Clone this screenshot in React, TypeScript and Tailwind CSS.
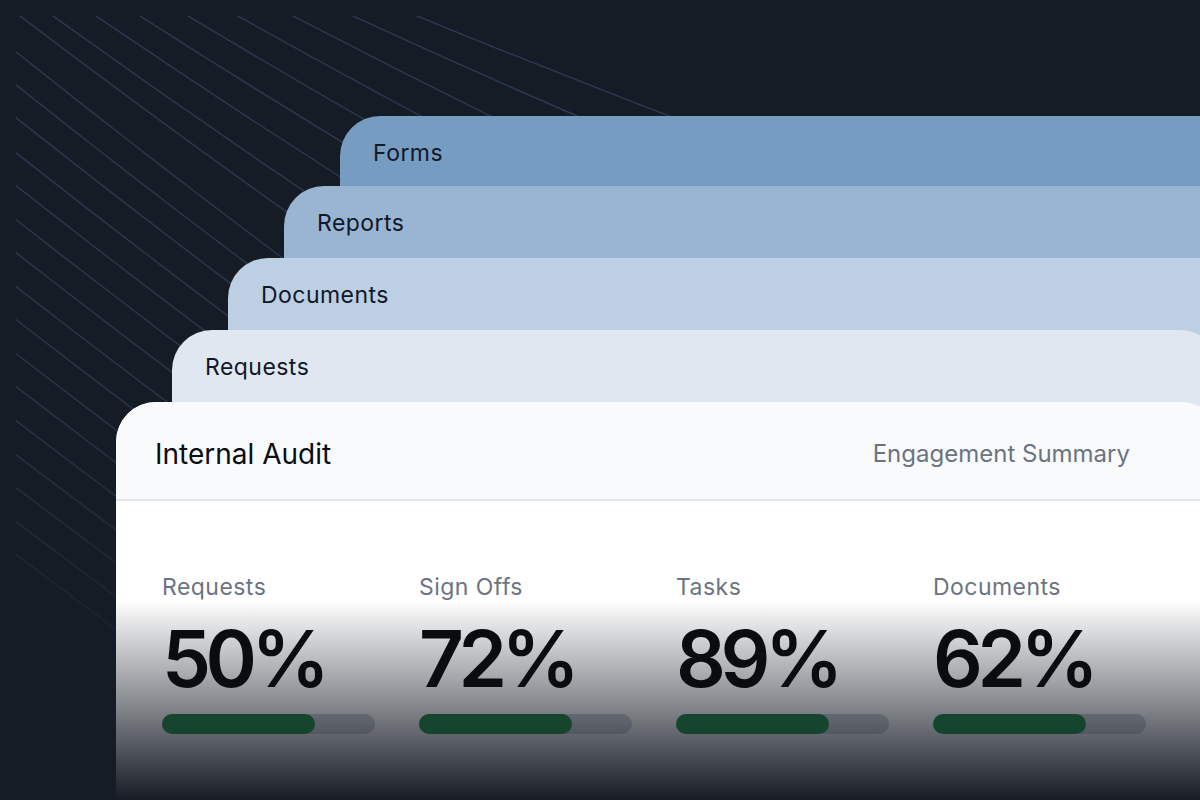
import React from 'react';

const TOP_STARTS = [
  { x: 20, s: 0.76 },
  { x: 53, s: 0.72 },
  { x: 96, s: 0.68 },
  { x: 140, s: 0.64 },
  { x: 188, s: 0.6 },
  { x: 238, s: 0.56 },
  { x: 293, s: 0.52 },
  { x: 353, s: 0.46 },
  { x: 417, s: 0.41 },
];

const LEFT_STARTS = [52, 85, 118, 153, 186, 220, 253, 287, 320, 354, 387, 421, 455, 488, 522, 555];

const TABS = [
  { label: 'Forms', box: 'ml-[340px] w-[960px] h-[110px] bg-[#769cc2]' },
  { label: 'Reports', box: 'ml-[284px] w-[1016px] h-[112px] bg-[#9ab5d2]' },
  { label: 'Documents', box: 'ml-[228px] w-[1072px] h-[112px] bg-[#bccfe3]' },
  { label: 'Requests', box: 'ml-[172px] w-[1048px] h-[112px] rounded-tr-[40px] bg-[#e0e7f0]' },
];

const STATS = [
  { label: 'Requests', value: '50%' },
  { label: 'Sign Offs', value: '72%' },
  { label: 'Tasks', value: '89%' },
  { label: 'Documents', value: '62%' },
];

function curve(x0: number, y0: number, s: number) {
  const d = 760;
  const x1 = x0 + d / 2;
  const y1 = y0 + (d / 2) * s;
  const x2 = x0 + d;
  const y2 = y0 + (d / 2) * s + (d / 2) * s * 0.82;
  return `M${x0} ${y0} Q${x1} ${y1} ${x2} ${y2}`;
}

function BackgroundLines() {
  return (
    <svg className="absolute inset-0" width="1200" height="800" viewBox="0 0 1200 800">
      <defs>
        <clipPath id="lines-clip">
          <rect x="16" y="16" width="1184" height="784" />
        </clipPath>
        <linearGradient id="lines-fade" x1="0" y1="0" x2="0" y2="690" gradientUnits="userSpaceOnUse">
          <stop offset="0" stopColor="#2a3a52" />
          <stop offset="0.6" stopColor="#27364b" />
          <stop offset="1" stopColor="#161c25" />
        </linearGradient>
      </defs>
      <g clipPath="url(#lines-clip)" fill="none" stroke="url(#lines-fade)" strokeWidth="1.4">
        {TOP_STARTS.map((l) => (
          <path key={`t${l.x}`} d={curve(l.x - 6, 16 - 6 * l.s, l.s)} />
        ))}
        {LEFT_STARTS.map((y, i) => (
          <path key={`l${y}`} d={curve(10, y - 5, 0.8 - i * 0.003)} />
        ))}
      </g>
    </svg>
  );
}

export default function App() {
  return (
    <div className="relative w-[1200px] h-[800px] overflow-hidden bg-[#161c25] font-['Inter','Liberation_Sans',sans-serif]">
      <BackgroundLines />

      <div className="relative flex flex-col pt-[116px]">
        {TABS.map((tab) => (
          <div key={tab.label} className={`${tab.box} -mb-[40px] shrink-0 rounded-tl-[40px] pl-[33px] pt-[23px]`}>
            <span className="text-[23px] leading-[28px] tracking-[0.02em] text-[#111827]">{tab.label}</span>
          </div>
        ))}

        {/* Main card */}
        <div className="ml-[116px] w-[1104px] shrink-0 overflow-hidden rounded-t-[40px] bg-white">
          <div className="flex h-[99px] items-center justify-between border-b-2 border-[#e2e8f0] bg-[#f8fafc] pl-[39px] pr-[90px] pt-1.5">
            <h1 className="text-[28px] leading-[36px] text-[#0a0c10]">Internal Audit</h1>
            <span className="text-[24px] leading-[32px] text-[#6b7480]">Engagement Summary</span>
          </div>

          <div className="grid h-[300px] grid-cols-[repeat(4,257px)] bg-[linear-gradient(to_bottom,#ffffff_0px,#ffffff_99px,#161c25_299px)] pl-[46px] pt-[72px]">
            {STATS.map((stat) => (
              <div key={stat.label} className="flex flex-col">
                <span className="text-[23px] leading-[28px] tracking-[0.02em] text-[#6b7480]">{stat.label}</span>
                <span className="mt-4 text-[78px] font-semibold leading-[84px] tracking-[-0.07em] text-[#0a0c10]">
                  {stat.value}
                </span>
                <div className="mt-[13px] h-5 w-[213px] rounded-full bg-[#1e293b]/25">
                  <div className="h-full w-[153px] rounded-full bg-[#15452f]" />
                </div>
              </div>
            ))}
          </div>
        </div>
      </div>
    </div>
  );
}
